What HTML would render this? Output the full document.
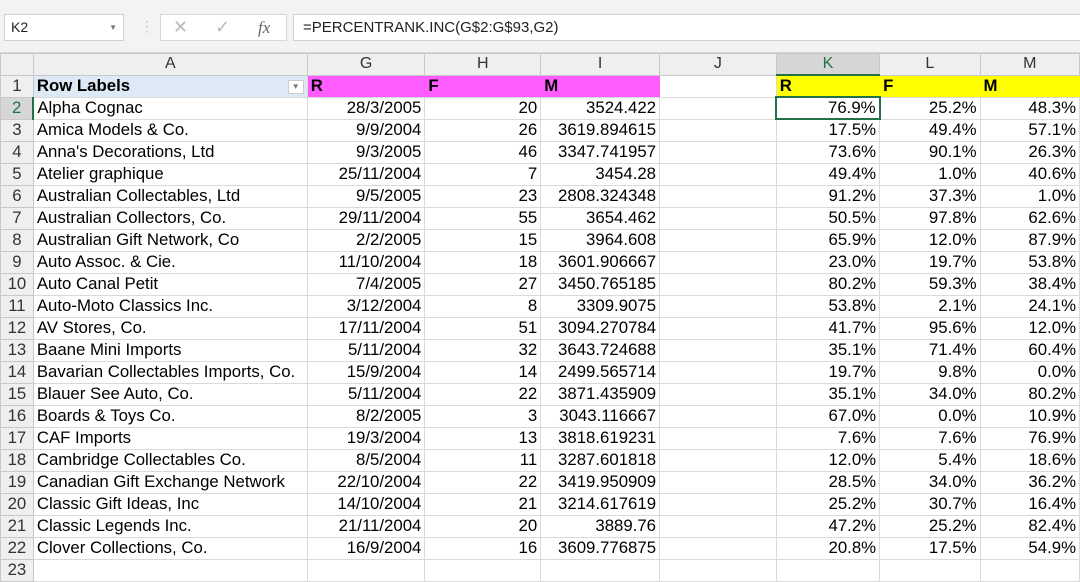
<!DOCTYPE html>
<html><head><meta charset="utf-8"><style>
*{margin:0;padding:0;box-sizing:border-box}
body{width:1080px;height:560px;overflow:hidden;background:#fff;font-family:"Liberation Sans",sans-serif;position:relative}
.top{position:absolute;left:0;top:0;width:1080px;height:53px;background:#f3f3f3;border-bottom:1px solid #d4d4d4}
.nb{position:absolute;left:4px;top:14px;width:120px;height:27px;background:#fff;border:1px solid #d0d0d0;font-size:14px;line-height:25px;padding-left:6px;color:#222}
.nb span{position:absolute;right:6px;top:0;font-size:8px;color:#777}
.ic{position:absolute;left:160px;top:14px;width:127px;height:27px;background:#fff;border:1px solid #d8d8d8;color:#bbb;font-size:18px;line-height:25px}
.fb{position:absolute;left:293px;top:14px;width:790px;height:27px;background:#fff;border:1px solid #d0d0d0;font-size:15px;line-height:25px;padding-left:9px;color:#222}
table{position:absolute;left:0;top:53px;border-collapse:collapse;table-layout:fixed;font-size:16.8px}
td{height:22px;border:1px solid #dadada;white-space:nowrap;overflow:hidden;padding:0 3px;line-height:20px;color:#000}
tr.h td{height:21px;background:#efefef;text-align:center;color:#333;border-color:#c8c8c8;font-size:16px}
td.rn{background:#efefef;text-align:center;color:#333;border-color:#c8c8c8;padding:0}
td.n{text-align:right}
.p{background:#ff5cff;font-weight:bold;border-color:#ff5cff #ff5cff #dadada #ff5cff}
.y{background:#ffff00;font-weight:bold;border-color:#ffff00 #ffff00 #dadada #ffff00}
.lb{background:#dde9f5;font-weight:bold}
</style></head><body>
<div class="top">
<div class="nb">K2<span>▼</span></div>
<div style="position:absolute;left:140px;top:18px;color:#bbb;font-size:14px">⋮</div>
<div class="ic"><span style="position:absolute;left:12px">✕</span><span style="position:absolute;left:54px">✓</span><span style="position:absolute;left:97px;font-family:'Liberation Serif',serif;font-style:italic;color:#666;font-size:17px">fx</span></div>
<div class="fb">=PERCENTRANK.INC(G$2:G$93,G2)</div>
</div>
<table>
<colgroup><col style="width:33px"><col style="width:274px"><col style="width:118px"><col style="width:117px"><col style="width:119px"><col style="width:118px"><col style="width:104px"><col style="width:101px"><col style="width:100px"></colgroup>
<tr class="h" style="height:21px"><td style="background:#efefef;height:21px"></td><td>A</td><td>G</td><td>H</td><td>I</td><td>J</td><td style="background:#d6d6d6;color:#217346;border-bottom:2px solid #217346">K</td><td>L</td><td>M</td></tr>
<tr><td class="rn">1</td><td class="lb">Row Labels<span style="float:right;font-size:8px;color:#777;border:1px solid #ccc;background:#fff;padding:0 3px;margin-top:4px;line-height:12px">▼</span></td><td class="p">R</td><td class="p">F</td><td class="p">M</td><td></td><td class="y">R</td><td class="y">F</td><td class="y">M</td></tr>
<tr><td class="rn" style="border-right:2px solid #217346;color:#217346;background:#d6d6d6">2</td><td>Alpha Cognac</td><td class="n">28/3/2005</td><td class="n">20</td><td class="n">3524.422</td><td></td><td class="n" style="border:2px solid #217346">76.9%</td><td class="n">25.2%</td><td class="n">48.3%</td></tr>
<tr><td class="rn">3</td><td>Amica Models &amp; Co.</td><td class="n">9/9/2004</td><td class="n">26</td><td class="n">3619.894615</td><td></td><td class="n">17.5%</td><td class="n">49.4%</td><td class="n">57.1%</td></tr>
<tr><td class="rn">4</td><td>Anna's Decorations, Ltd</td><td class="n">9/3/2005</td><td class="n">46</td><td class="n">3347.741957</td><td></td><td class="n">73.6%</td><td class="n">90.1%</td><td class="n">26.3%</td></tr>
<tr><td class="rn">5</td><td>Atelier graphique</td><td class="n">25/11/2004</td><td class="n">7</td><td class="n">3454.28</td><td></td><td class="n">49.4%</td><td class="n">1.0%</td><td class="n">40.6%</td></tr>
<tr><td class="rn">6</td><td>Australian Collectables, Ltd</td><td class="n">9/5/2005</td><td class="n">23</td><td class="n">2808.324348</td><td></td><td class="n">91.2%</td><td class="n">37.3%</td><td class="n">1.0%</td></tr>
<tr><td class="rn">7</td><td>Australian Collectors, Co.</td><td class="n">29/11/2004</td><td class="n">55</td><td class="n">3654.462</td><td></td><td class="n">50.5%</td><td class="n">97.8%</td><td class="n">62.6%</td></tr>
<tr><td class="rn">8</td><td>Australian Gift Network, Co</td><td class="n">2/2/2005</td><td class="n">15</td><td class="n">3964.608</td><td></td><td class="n">65.9%</td><td class="n">12.0%</td><td class="n">87.9%</td></tr>
<tr><td class="rn">9</td><td>Auto Assoc. &amp; Cie.</td><td class="n">11/10/2004</td><td class="n">18</td><td class="n">3601.906667</td><td></td><td class="n">23.0%</td><td class="n">19.7%</td><td class="n">53.8%</td></tr>
<tr><td class="rn">10</td><td>Auto Canal Petit</td><td class="n">7/4/2005</td><td class="n">27</td><td class="n">3450.765185</td><td></td><td class="n">80.2%</td><td class="n">59.3%</td><td class="n">38.4%</td></tr>
<tr><td class="rn">11</td><td>Auto-Moto Classics Inc.</td><td class="n">3/12/2004</td><td class="n">8</td><td class="n">3309.9075</td><td></td><td class="n">53.8%</td><td class="n">2.1%</td><td class="n">24.1%</td></tr>
<tr><td class="rn">12</td><td>AV Stores, Co.</td><td class="n">17/11/2004</td><td class="n">51</td><td class="n">3094.270784</td><td></td><td class="n">41.7%</td><td class="n">95.6%</td><td class="n">12.0%</td></tr>
<tr><td class="rn">13</td><td>Baane Mini Imports</td><td class="n">5/11/2004</td><td class="n">32</td><td class="n">3643.724688</td><td></td><td class="n">35.1%</td><td class="n">71.4%</td><td class="n">60.4%</td></tr>
<tr><td class="rn">14</td><td>Bavarian Collectables Imports, Co.</td><td class="n">15/9/2004</td><td class="n">14</td><td class="n">2499.565714</td><td></td><td class="n">19.7%</td><td class="n">9.8%</td><td class="n">0.0%</td></tr>
<tr><td class="rn">15</td><td>Blauer See Auto, Co.</td><td class="n">5/11/2004</td><td class="n">22</td><td class="n">3871.435909</td><td></td><td class="n">35.1%</td><td class="n">34.0%</td><td class="n">80.2%</td></tr>
<tr><td class="rn">16</td><td>Boards &amp; Toys Co.</td><td class="n">8/2/2005</td><td class="n">3</td><td class="n">3043.116667</td><td></td><td class="n">67.0%</td><td class="n">0.0%</td><td class="n">10.9%</td></tr>
<tr><td class="rn">17</td><td>CAF Imports</td><td class="n">19/3/2004</td><td class="n">13</td><td class="n">3818.619231</td><td></td><td class="n">7.6%</td><td class="n">7.6%</td><td class="n">76.9%</td></tr>
<tr><td class="rn">18</td><td>Cambridge Collectables Co.</td><td class="n">8/5/2004</td><td class="n">11</td><td class="n">3287.601818</td><td></td><td class="n">12.0%</td><td class="n">5.4%</td><td class="n">18.6%</td></tr>
<tr><td class="rn">19</td><td>Canadian Gift Exchange Network</td><td class="n">22/10/2004</td><td class="n">22</td><td class="n">3419.950909</td><td></td><td class="n">28.5%</td><td class="n">34.0%</td><td class="n">36.2%</td></tr>
<tr><td class="rn">20</td><td>Classic Gift Ideas, Inc</td><td class="n">14/10/2004</td><td class="n">21</td><td class="n">3214.617619</td><td></td><td class="n">25.2%</td><td class="n">30.7%</td><td class="n">16.4%</td></tr>
<tr><td class="rn">21</td><td>Classic Legends Inc.</td><td class="n">21/11/2004</td><td class="n">20</td><td class="n">3889.76</td><td></td><td class="n">47.2%</td><td class="n">25.2%</td><td class="n">82.4%</td></tr>
<tr><td class="rn">22</td><td>Clover Collections, Co.</td><td class="n">16/9/2004</td><td class="n">16</td><td class="n">3609.776875</td><td></td><td class="n">20.8%</td><td class="n">17.5%</td><td class="n">54.9%</td></tr>
<tr><td class="rn">23</td><td></td><td></td><td></td><td></td><td></td><td></td><td></td><td></td></tr>
</table>
</body></html>
